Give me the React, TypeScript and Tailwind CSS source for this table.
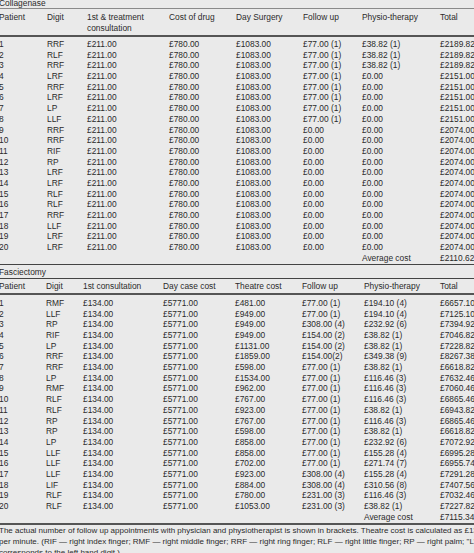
import React from 'react';

type Row = [string, string, string, string, string, string, string, string];

const COLLAGENASE: Row[] = [
  ['1', 'RRF', '£211.00', '£780.00', '£1083.00', '£77.00 (1)', '£38.82 (1)', '£2189.82'],
  ['2', 'RLF', '£211.00', '£780.00', '£1083.00', '£77.00 (1)', '£38.82 (1)', '£2189.82'],
  ['3', 'RRF', '£211.00', '£780.00', '£1083.00', '£77.00 (1)', '£38.82 (1)', '£2189.82'],
  ['4', 'LRF', '£211.00', '£780.00', '£1083.00', '£77.00 (1)', '£0.00', '£2151.00'],
  ['5', 'RRF', '£211.00', '£780.00', '£1083.00', '£77.00 (1)', '£0.00', '£2151.00'],
  ['6', 'LRF', '£211.00', '£780.00', '£1083.00', '£77.00 (1)', '£0.00', '£2151.00'],
  ['7', 'LP', '£211.00', '£780.00', '£1083.00', '£77.00 (1)', '£0.00', '£2151.00'],
  ['8', 'LLF', '£211.00', '£780.00', '£1083.00', '£77.00 (1)', '£0.00', '£2151.00'],
  ['9', 'RRF', '£211.00', '£780.00', '£1083.00', '£0.00', '£0.00', '£2074.00'],
  ['10', 'RRF', '£211.00', '£780.00', '£1083.00', '£0.00', '£0.00', '£2074.00'],
  ['11', 'RIF', '£211.00', '£780.00', '£1083.00', '£0.00', '£0.00', '£2074.00'],
  ['12', 'RP', '£211.00', '£780.00', '£1083.00', '£0.00', '£0.00', '£2074.00'],
  ['13', 'LRF', '£211.00', '£780.00', '£1083.00', '£0.00', '£0.00', '£2074.00'],
  ['14', 'LRF', '£211.00', '£780.00', '£1083.00', '£0.00', '£0.00', '£2074.00'],
  ['15', 'RLF', '£211.00', '£780.00', '£1083.00', '£0.00', '£0.00', '£2074.00'],
  ['16', 'RLF', '£211.00', '£780.00', '£1083.00', '£0.00', '£0.00', '£2074.00'],
  ['17', 'RRF', '£211.00', '£780.00', '£1083.00', '£0.00', '£0.00', '£2074.00'],
  ['18', 'LLF', '£211.00', '£780.00', '£1083.00', '£0.00', '£0.00', '£2074.00'],
  ['19', 'LRF', '£211.00', '£780.00', '£1083.00', '£0.00', '£0.00', '£2074.00'],
  ['20', 'LRF', '£211.00', '£780.00', '£1083.00', '£0.00', '£0.00', '£2074.00'],
];

const FASCIECTOMY: Row[] = [
  ['1', 'RMF', '£134.00', '£5771.00', '£481.00', '£77.00 (1)', '£194.10 (4)', '£6657.10'],
  ['2', 'LLF', '£134.00', '£5771.00', '£949.00', '£77.00 (1)', '£194.10 (4)', '£7125.10'],
  ['3', 'RP', '£134.00', '£5771.00', '£949.00', '£308.00 (4)', '£232.92 (6)', '£7394.92'],
  ['4', 'RIF', '£134.00', '£5771.00', '£949.00', '£154.00 (2)', '£38.82 (1)', '£7046.82'],
  ['5', 'LP', '£134.00', '£5771.00', '£1131.00', '£154.00 (2)', '£38.82 (1)', '£7228.82'],
  ['6', 'RRF', '£134.00', '£5771.00', '£1859.00', '£154.00(2)', '£349.38 (9)', '£8267.38'],
  ['7', 'RRF', '£134.00', '£5771.00', '£598.00', '£77.00 (1)', '£38.82 (1)', '£6618.82'],
  ['8', 'LP', '£134.00', '£5771.00', '£1534.00', '£77.00 (1)', '£116.46 (3)', '£7632.46'],
  ['9', 'RMF', '£134.00', '£5771.00', '£962.00', '£77.00 (1)', '£116.46 (3)', '£7060.46'],
  ['10', 'RLF', '£134.00', '£5771.00', '£767.00', '£77.00 (1)', '£116.46 (3)', '£6865.46'],
  ['11', 'RLF', '£134.00', '£5771.00', '£923.00', '£77.00 (1)', '£38.82 (1)', '£6943.82'],
  ['12', 'RP', '£134.00', '£5771.00', '£767.00', '£77.00 (1)', '£116.46 (3)', '£6865.46'],
  ['13', 'RP', '£134.00', '£5771.00', '£598.00', '£77.00 (1)', '£38.82 (1)', '£6618.82'],
  ['14', 'LP', '£134.00', '£5771.00', '£858.00', '£77.00 (1)', '£232.92 (6)', '£7072.92'],
  ['15', 'LLF', '£134.00', '£5771.00', '£858.00', '£77.00 (1)', '£155.28 (4)', '£6995.28'],
  ['16', 'LLF', '£134.00', '£5771.00', '£702.00', '£77.00 (1)', '£271.74 (7)', '£6955.74'],
  ['17', 'LLF', '£134.00', '£5771.00', '£923.00', '£308.00 (4)', '£155.28 (4)', '£7291.28'],
  ['18', 'LIF', '£134.00', '£5771.00', '£884.00', '£308.00 (4)', '£310.56 (8)', '£7407.56'],
  ['19', 'RLF', '£134.00', '£5771.00', '£780.00', '£231.00 (3)', '£116.46 (3)', '£7032.46'],
  ['20', 'RLF', '£134.00', '£5771.00', '£1053.00', '£231.00 (3)', '£38.82 (1)', '£7227.82'],
];

const colsA = 'grid grid-cols-[48px_40px_82px_67px_67px_59px_78px_120px]';
const colsB = 'grid grid-cols-[47px_37px_80px_72px_67px_62px_76px_120px]';

function Body({ rows, cols, top }: { rows: Row[]; cols: string; top: string }) {
  return (
    <div className={top}>
      {rows.map((r) => (
        <div key={r[0]} className={`${cols} h-[10.7px] leading-[10.7px]`}>
          {r.map((c, i) => (
            <div key={i} className="whitespace-nowrap">{c}</div>
          ))}
        </div>
      ))}
    </div>
  );
}

export default function App() {
  return (
    <div className="w-[474px] h-[553px] overflow-hidden bg-[#eaeaea] text-[#2a2a2a] text-[8.4px] font-['Liberation_Sans',Arial,sans-serif]">
      <div className="w-[600px] -ml-[1px] -mt-[2px]">
        {/* Collagenase */}
        <div className="h-[11px] leading-[11px] border-b border-[#8a8a8a]">Collagenase</div>
        <div className={`${colsA} pt-[3px] pb-[1px] leading-[11px] border-b-2 border-[#555]`}>
          <div>Patient</div>
          <div>Digit</div>
          <div>1st &amp; treatment<br />consultation</div>
          <div>Cost of drug</div>
          <div>Day Surgery</div>
          <div>Follow up</div>
          <div>Physio-therapy</div>
          <div>Total</div>
        </div>
        <Body rows={COLLAGENASE} cols={colsA} top="pt-[2px]" />
        <div className={`${colsA} h-[10.7px] leading-[10.7px] border-b border-[#444] box-content pb-[1px]`}>
          <div className="col-start-7">Average cost</div>
          <div>£2110.62</div>
        </div>

        {/* Fasciectomy */}
        <div className="h-[14px] leading-[14px] border-b border-[#444]">Fasciectomy</div>
        <div className={`${colsB} h-[14px] leading-[15px] border-b-2 border-[#555] box-content`}>
          <div>Patient</div>
          <div>Digit</div>
          <div>1st consultation</div>
          <div>Day case cost</div>
          <div>Theatre cost</div>
          <div>Follow up</div>
          <div>Physio-therapy</div>
          <div>Total</div>
        </div>
        <Body rows={FASCIECTOMY} cols={colsB} top="pt-[2.5px]" />
        <div className={`${colsB} h-[10.7px] leading-[10.7px] border-b-2 border-[#555] box-content pb-[1px]`}>
          <div className="col-start-7">Average cost</div>
          <div>£7115.34</div>
        </div>

        <div className="leading-[11px] text-[8px] whitespace-nowrap">
          <div>The actual number of follow up appointments with physician and physiotherapist is shown in brackets. Theatre cost is calculated as £13</div>
          <div>per minute. (RIF — right index finger; RMF — right middle finger; RRF — right ring finger; RLF — right little finger; RP — right palm; "L"</div>
          <div>corresponds to the left hand digit.)</div>
        </div>
      </div>
    </div>
  );
}
